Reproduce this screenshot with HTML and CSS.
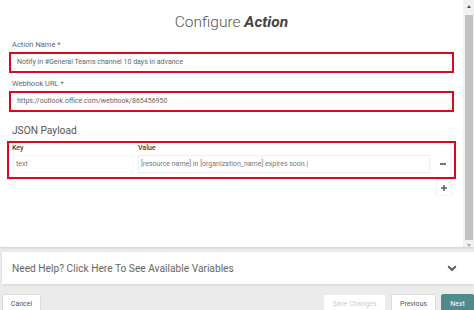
FILE: index.html
```html
<!DOCTYPE html>
<html>
<head>
<meta charset="utf-8">
<link rel="stylesheet" href="styles.css">
</head>
<body>
<div class="main">
  <div class="content">
    <h1 class="title">Configure <b>Action</b></h1>
    <div class="field">
      <label class="label">Action Name *</label>
      <div class="input red">Notify in #General Teams channel 10 days in advance</div>
    </div>
    <div class="field">
      <label class="label">Webhook URL *</label>
      <div class="input red">https://outlook.office.com/webhook/865456950</div>
    </div>
    <h2 class="section">JSON Payload</h2>
    <div class="payload-row">
      <div class="payload red">
        <div class="col key">
          <div class="th">Key</div>
          <div class="cell">text</div>
        </div>
        <div class="col value">
          <div class="th">Value</div>
          <div class="cell">[resource name] in [organization_name] expires soon.|</div>
        </div>
        <div class="col act">
          <div class="th">&nbsp;</div>
          <div class="btn-icon minus"><svg width="6" height="6" viewBox="0 0 6 6"><rect x="0" y="2.2" width="6" height="1.6" fill="#555"/></svg></div>
        </div>
      </div>
    </div>
    <div class="add-row">
      <div class="btn-icon plus"><svg width="6" height="6" viewBox="0 0 6 6"><rect x="0" y="2.3" width="6" height="1.4" fill="#555"/><rect x="2.3" y="0" width="1.4" height="6" fill="#555"/></svg></div>
    </div>
  </div>
  <div class="scrollbar">
    <div class="arrow up"></div>
    <div class="thumb"></div>
    <div class="arrow down"></div>
  </div>
</div>
<div class="help">
  <span>Need Help? Click Here To See Available Variables</span>
  <svg width="10" height="7" viewBox="0 0 10 7"><path d="M1.2 1.2 L5 4.9 L8.8 1.2" fill="none" stroke="#555" stroke-width="1.9"/></svg>
</div>
<div class="footer">
  <button class="btn">Cancel</button>
  <div class="right">
    <button class="btn disabled">Save Changes</button>
    <button class="btn">Previous</button>
    <button class="btn primary">Next</button>
  </div>
</div>
</body>
</html>
```

FILE: styles.css
```css
* { box-sizing: border-box; }
html, body { margin: 0; padding: 0; }
body {
  width: 474px;
  height: 310px;
  overflow: hidden;
  background: #ebebeb;
  font-family: Roboto, "Liberation Sans", sans-serif;
  color: #555;
}
.main {
  display: flex;
  height: 247px;
  background: #fff;
  box-shadow: 0 1px 2px rgba(0,0,0,0.12);
}
.content {
  flex: 1;
  padding: 0 9px 0 9px;
}
.title {
  margin: 12px 0 0 0;
  height: 23px;
  text-align: center;
  font-size: 15.5px;
  font-weight: 300;
  color: #555;
  line-height: 20px;
}
.title b {
  font-weight: 700;
  font-style: italic;
  color: #444;
}
.field { margin-top: 3px; }
.field + .field { margin-top: 4px; }
.label {
  display: block;
  font-size: 7.5px;
  line-height: 14px;
  padding-left: 3px;
  color: #666;
}
.input {
  height: 21px;
  padding-left: 6px;
  font-size: 7px;
  line-height: 17px;
  color: #666;
}
.red { border: 2px solid #d8091f; }
.section {
  margin: 12px 0 0 3px;
  font-size: 10.2px;
  font-weight: 400;
  color: #555;
  line-height: 14px;
  height: 17px;
}
.payload-row { margin-left: -2px; margin-right: -2px; }
.payload {
  display: flex;
  height: 38px;
  padding: 0 3px 0 3px;
}
.col { display: flex; flex-direction: column; }
.key { width: 121px; }
.value { width: 292px; margin-left: 5px; }
.act { flex: 1; align-items: center; }
.th {
  font-size: 7px;
  font-weight: 500;
  color: #444;
  line-height: 11px;
  height: 12px;
}
.cell {
  height: 18px;
  border: 1px solid #eee;
  font-size: 7px;
  line-height: 16px;
  padding-left: 2px;
  color: #777;
}
.key .cell { border-color: #f6f6f6; padding-left: 3px; }
.btn-icon {
  width: 16px;
  height: 17px;
  display: flex;
  align-items: center;
  justify-content: center;
}
.minus { margin-left: 4px; }
.add-row {
  display: flex;
  justify-content: flex-end;
  padding-right: 2px;
  margin-top: 0px;
}
.plus {
  border: 1px solid #f2f2f2;
  width: 16px;
  height: 17px;
}
.scrollbar {
  width: 11px;
  background: #f1f1f1;
  display: flex;
  flex-direction: column;
  align-items: center;
  padding: 0 1px;
}
.arrow {
  width: 0; height: 0;
  border-left: 2.5px solid transparent;
  border-right: 2.5px solid transparent;
}
.arrow.up { border-bottom: 3px solid #555; margin: 5px 0 7px; }
.arrow.down { border-top: 3px solid #a3a3a3; margin: 4px 0 0; }
.thumb {
  width: 8px;
  flex: 1;
  background: #c1c1c1;
}
.help {
  margin: 5px 0 0 2px;
  height: 32px;
  background: #fff;
  display: flex;
  align-items: center;
  justify-content: space-between;
  padding: 0 17px 0 10px;
  font-size: 10.2px;
  color: #666;
  box-shadow: 0 1px 2px rgba(0,0,0,0.1);
}
.footer {
  display: flex;
  justify-content: space-between;
  margin-top: 10px;
  padding-left: 2px;
}
.right { display: flex; gap: 5px; }
.btn {
  height: 20px;
  border: 1px solid #ddd;
  background: #fff;
  font-family: Roboto, "Liberation Sans", sans-serif;
  font-size: 7px;
  color: #555;
  padding: 0;
  border-radius: 2px;
  white-space: nowrap;
}
.btn.disabled { color: #ccc; border-color: #eee; width: 63px; }
.btn.primary {
  background: #4f8b8c;
  border-color: #4f8b8c;
  color: #fff;
  width: 33px;
}
.footer > .btn { width: 39px; }
.right .btn:nth-child(2) { width: 45px; }
```
